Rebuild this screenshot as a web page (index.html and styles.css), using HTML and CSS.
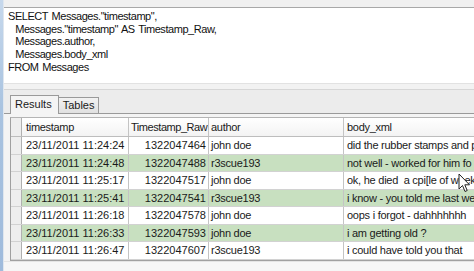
FILE: index.html
```html
<!DOCTYPE html>
<html>
<head>
<meta charset="utf-8">
<link rel="stylesheet" href="styles.css">
</head>
<body>
<div class="window">
  <div class="frame"></div>
  <div class="main">
    <div class="topbar"></div>
    <div class="editor">SELECT Messages."timestamp",
  Messages."timestamp" AS Timestamp_Raw,
  Messages.author,
  Messages.body_xml
FROM Messages</div>
    <div class="band"></div>
    <div class="tabstrip">
      <div class="tab active">Results</div>
      <div class="tab">Tables</div>
    </div>
    <div class="panel">
      <div class="grid">
        <div class="row head">
          <div class="c ind"></div>
          <div class="c ts">timestamp</div>
          <div class="c raw hraw">Timestamp_Raw</div>
          <div class="c au">author</div>
          <div class="c body">body_xml</div>
        </div>
        <div class="row">
          <div class="c ind"></div>
          <div class="c ts">23/11/2011 11:24:24</div>
          <div class="c raw num">1322047464</div>
          <div class="c au">john doe</div>
          <div class="c body">did the rubber stamps and p</div>
        </div>
        <div class="row alt">
          <div class="c ind"></div>
          <div class="c ts">23/11/2011 11:24:48</div>
          <div class="c raw num">1322047488</div>
          <div class="c au">r3scue193</div>
          <div class="c body">not well - worked for him fo</div>
        </div>
        <div class="row">
          <div class="c ind"></div>
          <div class="c ts">23/11/2011 11:25:17</div>
          <div class="c raw num">1322047517</div>
          <div class="c au">john doe</div>
          <div class="c body">ok, he died &nbsp;a cpi[le of week</div>
        </div>
        <div class="row alt">
          <div class="c ind"></div>
          <div class="c ts">23/11/2011 11:25:41</div>
          <div class="c raw num">1322047541</div>
          <div class="c au">r3scue193</div>
          <div class="c body">i know - you told me last we</div>
        </div>
        <div class="row">
          <div class="c ind"></div>
          <div class="c ts">23/11/2011 11:26:18</div>
          <div class="c raw num">1322047578</div>
          <div class="c au">john doe</div>
          <div class="c body">oops i forgot - dahhhhhhh</div>
        </div>
        <div class="row alt">
          <div class="c ind"></div>
          <div class="c ts">23/11/2011 11:26:33</div>
          <div class="c raw num">1322047593</div>
          <div class="c au">john doe</div>
          <div class="c body">i am getting old ?</div>
        </div>
        <div class="row">
          <div class="c ind"></div>
          <div class="c ts">23/11/2011 11:26:47</div>
          <div class="c raw num">1322047607</div>
          <div class="c au">r3scue193</div>
          <div class="c body">i could have told you that</div>
        </div>
      </div>
    </div>
    <div class="footer"></div>
  </div>
</div>
<svg class="cursor" width="13" height="21" viewBox="0 0 13 21">
  <path d="M1 1 L1 16 L4.5 12.5 L7 18.5 L9.2 17.5 L6.8 11.8 L11.5 11.8 Z" fill="#fff" stroke="#222" stroke-width="1" stroke-linejoin="round"/>
</svg>
</body>
</html>
```

FILE: styles.css
```css
html, body {
  margin: 0;
  padding: 0;
}
body {
  width: 474px;
  height: 271px;
  overflow: hidden;
  position: relative;
  font-family: "Liberation Sans", Arial, sans-serif;
  font-size: 11px;
  color: #1a1a1a;
  background: #f4f4f4;
}
.window {
  display: flex;
  height: 271px;
}
.frame {
  width: 3px;
  flex: none;
  background: linear-gradient(to bottom, #c6d8ec, #a9c3e0 40%, #9fbbdc);
  border-right: 1px solid #dfe6ee;
}
.main {
  flex: 1;
  display: flex;
  flex-direction: column;
  min-width: 0;
}
.topbar {
  height: 7px;
  background: #f0f0f0;
  border-bottom: 1px solid #a8a8a8;
}
.editor {
  height: 73px;
  background: #fff;
  white-space: pre;
  line-height: 12.7px;
  padding: 2px 0 0 4px;
  color: #111;
  letter-spacing: -0.45px;
  word-spacing: 1px;
}
.band {
  height: 5px;
  background: #f2f2f2;
  border-top: 1px solid #e2e2e2;
  border-bottom: 1px solid #d6d6d6;
}
.tabstrip {
  height: 23px;
  background: #ececec;
  display: flex;
  align-items: flex-end;
  padding-left: 6px;
  border-bottom: 1px solid #9a9a9a;
}
.tab {
  border: 1px solid #9a9a9a;
  border-bottom: none;
  padding: 0 4px;
  height: 15px;
  line-height: 15px;
  background: linear-gradient(to bottom, #f2f2f2, #e0e0e0);
  margin-left: -1px;
}
.tab.active {
  height: 18px;
  line-height: 17px;
  padding: 0 6px 0 4px;
  background: #f4f4f4;
  margin-left: 0;
  margin-bottom: -1px;
  position: relative;
  z-index: 1;
}
.panel {
  padding: 3px 0 0 6px;
  background: #f4f4f4;
}
.grid {
  border-left: 1px solid #a0a0a0;
  border-top: 1px solid #b4b4b4;
  border-bottom: 1px solid #a0a0a0;
  background: #fff;
}
.row {
  display: flex;
  height: 17.5px;
  border-bottom: 1px solid #d2d2d2;
  box-sizing: border-box;
  white-space: nowrap;
}
.row.head {
  height: 19px;
  background: linear-gradient(to bottom, #ffffff, #f3f3f3);
  border-bottom: 1px solid #bdbdbd;
}
.row.alt {
  background: #c8e0c0;
}
.c {
  border-right: 1px solid #c4c4c4;
  box-sizing: border-box;
  line-height: 16px;
  overflow: hidden;
  flex: none;
}
.head .c {
  line-height: 18px;
  letter-spacing: -0.3px;
}
.head .hraw {
  padding-left: 2px;
  letter-spacing: -0.45px;
}
.ind {
  width: 11px;
  background: #eeeeee;
  border-right-color: #b0b0b0;
}
.ts {
  width: 107px;
  padding-left: 4px;
}
.raw {
  width: 80px;
  padding-left: 3px;
}
.raw.num {
  text-align: right;
  padding: 0 2px 0 0;
}
.au {
  width: 135px;
  padding-left: 2px;
  letter-spacing: -0.25px;
}
.body {
  flex: 1;
  padding-left: 3px;
  border-right: none;
  letter-spacing: -0.25px;
}
.footer {
  flex: 1;
  background: #f6f6f6;
  border-top: 1px solid #e4e4e4;
}
.cursor {
  position: absolute;
  left: 458px;
  top: 173px;
}
```
